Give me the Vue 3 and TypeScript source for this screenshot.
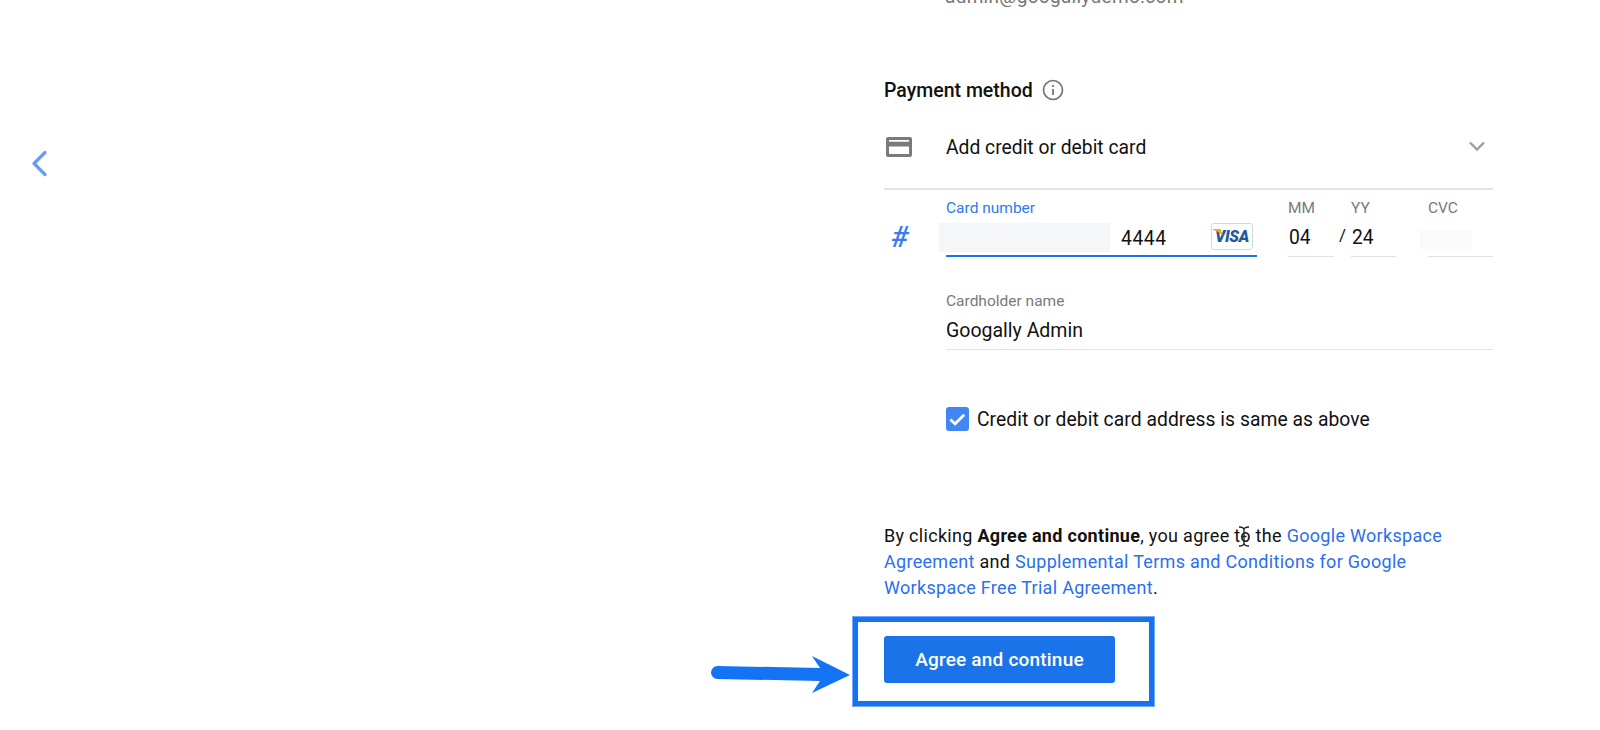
<script setup lang="ts">
const terms = [
  'Google Workspace Agreement',
  'Supplemental Terms and Conditions for Google Workspace Free Trial Agreement',
]
</script>

<template>
  <div class="page">
    <aside class="rail">
      <svg class="back" width="20" height="28" viewBox="0 0 20 28" fill="none">
        <path d="M17 2.500 6 13.500l11 11" stroke="#659df6" stroke-width="3.200" stroke-linecap="round" stroke-linejoin="round" />
      </svg>
    </aside>

    <main class="col">
      <div class="email">admin@googallydemo.com</div>

      <div class="pm-title">
        <span>Payment method</span>
        <svg width="22" height="22" viewBox="0 0 22 22" fill="none">
          <circle cx="11" cy="11" r="9.500" stroke="#757575" stroke-width="1.700" />
          <path d="M11 10v6" stroke="#757575" stroke-width="1.800" />
          <path d="M11 6v2" stroke="#757575" stroke-width="1.800" />
        </svg>
      </div>

      <div class="pm-row">
        <svg class="cardicon" width="26" height="20" viewBox="0 0 26 20">
          <path fill="#7a7a7a" fill-rule="evenodd" d="M2 0h22a2 2 0 0 1 2 2v16a2 2 0 0 1-2 2H2a2 2 0 0 1-2-2V2a2 2 0 0 1 2-2Zm1 3v1.700h20V3H3Zm0 6.500V17h20V9.500H3Z" />
        </svg>
        <span class="pm-label">Add credit or debit card</span>
        <svg class="chev" width="16" height="10" viewBox="0 0 16 10" fill="none">
          <path d="M1 1.500 8 8.500l7-7" stroke="#9e9e9e" stroke-width="2.400" />
        </svg>
      </div>

      <div class="card-row">
        <div class="hash">#</div>
        <div class="field number">
          <label class="blue">Card number</label>
          <div class="num-line">
            <span class="mask"></span>
            <span class="value digits">4444</span>
            <span class="visa">
              <svg class="flick" width="11" height="7" viewBox="0 0 11 7"><path fill="#f0a81e" d="M0 0h7.500L10 7C7 3.500 3.500 1.500 0 1Z" /></svg>
              <i>VISA</i>
            </span>
          </div>
        </div>
        <div class="field mm">
          <label>MM</label>
          <div class="value line">04</div>
        </div>
        <span class="slash">/</span>
        <div class="field yy">
          <label>YY</label>
          <div class="value line">24</div>
        </div>
        <div class="field cvc">
          <label>CVC</label>
          <div class="line cvc-line"><span class="mask small"></span></div>
        </div>
      </div>

      <div class="holder">
        <label>Cardholder name</label>
        <div class="value line">Googally Admin</div>
      </div>

      <div class="check-row">
        <span class="check">
          <svg width="24" height="24" viewBox="0 0 24 24" fill="none">
            <path d="M4.500 12.500l5 4.500L19 7.500" stroke="#fff" stroke-width="2.800" />
          </svg>
        </span>
        <span class="check-text">Credit or debit card address is same as above</span>
      </div>

      <p class="legal">
        By clicking <b>Agree and continue</b>, you agree to the
        <a>{{ terms[0] }}</a> and <a>{{ terms[1] }}</a>.
      </p>

      <div class="cta">
        <button type="button">Agree and continue</button>
        <span class="highlight"></span>
        <svg class="arrow" width="140" height="38" viewBox="0 0 140 38">
          <path fill="#1473f5" d="M6.500 10 109 12 101 0l38 19-38 18 8-12-102.500-2a6.500 6.500 0 0 1 0-13Z" />
        </svg>
      </div>

      <svg class="cursor" width="12" height="21" viewBox="0 0 12 21" fill="none">
        <path d="M1 1c3 0 5 1 5 3v13c0 2-2 3-5 3M11 1C8 1 6 2 6 4m0 13c0 2 2 3 5 3M3.500 10.500h5" stroke="#222" stroke-width="1.300" />
      </svg>
    </main>
  </div>
</template>

<style>
html, body { margin: 0; background: #fff; overflow: hidden; }
</style>

<style scoped>
.page {
  width: 1600px;
  height: 730px;
  overflow: hidden;
  display: flex;
  font-family: Roboto, "Liberation Sans", sans-serif;
  color: #111;
  background: #fff;
}
.rail { width: 884px; flex: none; padding: 150px 0 0 28px; box-sizing: border-box; }
.back { display: block; }
.col { width: 609px; flex: none; position: relative; }
.email {
  margin: -14px 0 0 61px;
  height: 22px;
  line-height: 22px;
  font-size: 19px;
  letter-spacing: 0.3px;
  color: #757575;
}
.pm-title {
  margin-top: 69px;
  height: 26px;
  display: flex;
  align-items: center;
  gap: 9px;
  font-size: 19.500px;
  font-weight: 500;
}
.pm-row {
  margin-top: 20px;
  height: 65px;
  border-bottom: 2px solid #e3e3e3;
  display: flex;
  align-items: flex-start;
  position: relative;
}
.cardicon { margin: 14px 0 0 2px; flex: none; }
.pm-label { margin: 11px 0 0 34px; font-size: 19.300px; line-height: 28px; }
.chev { position: absolute; right: 8px; top: 18px; }
.card-row { display: flex; align-items: flex-start; height: 67px; }
.hash {
  width: 62px;
  flex: none;
  padding: 31px 0 0 7px;
  box-sizing: border-box;
  font-size: 30px;
  font-weight: 500;
  line-height: 32px;
  font-style: italic;
  color: #3b7bf0;
}
label { display: block; font-size: 15.500px; line-height: 18px; color: #7a7a7a; }
label.blue { color: #2b7bf2; }
.field { padding-top: 9px; flex: none; }
.value { font-size: 19.300px; line-height: 28px; color: #111; }
.line { border-bottom: 1px solid #e2e2e2; }
.number { width: 311px; }
.num-line {
  height: 32px;
  margin-top: 6px;
  border-bottom: 2px solid #1a73e8;
  display: flex;
  align-items: center;
  position: relative;
}
.mask { display: block; width: 171px; height: 29px; margin: -3px 0 0 -7px; background: #f5f6f8; flex: none; }
.mask.small { width: 52px; height: 19px; background: #fafafa; margin: 0 0 0 -8px; }
.digits { margin-left: 11px; letter-spacing: 0.6px; }
.visa {
  position: absolute;
  right: 4px;
  top: 0;
  width: 42px;
  height: 27px;
  box-sizing: border-box;
  border: 1.500px solid #d6d6d6;
  border-radius: 3px;
  text-align: center;
  font-size: 16px;
  line-height: 26px;
  letter-spacing: -0.3px;
  font-weight: 900;
  color: #1d5a9e;
  background: #fff;
}
.visa i { font-style: italic; }
.flick { position: absolute; left: 1px; top: 5px; }
.mm { width: 46px; margin-left: 31px; }
.mm .value, .yy .value { margin-top: 6px; height: 34px; line-height: 29px; box-sizing: border-box; padding-left: 1px; }
.slash { width: 17px; flex: none; margin-top: 33px; font-size: 17px; line-height: 24px; padding-left: 5px; box-sizing: border-box; }
.yy { width: 45px; }
.cvc { width: 65px; margin-left: 32px; }
.cvc-line { margin-top: 6px; height: 34px; box-sizing: border-box; padding-top: 7px; }
.holder { margin: 35px 0 0 62px; }
.holder .value { margin-top: 7px; padding-bottom: 4px; font-size: 19.500px; }
.check-row { margin: 56px 0 0 62px; display: flex; align-items: center; gap: 8px; height: 26px; }
.check {
  width: 23px;
  height: 24px;
  border-radius: 3px;
  background: #4285f4;
  display: flex;
  align-items: center;
  justify-content: center;
}
.check-text { font-size: 19.300px; letter-spacing: 0.05px; }
.legal {
  margin: 91px 0 0;
  width: 600px;
  font-size: 18px;
  line-height: 26px;
  letter-spacing: 0.3px;
}
.legal b { font-weight: 700; }
.legal a { color: #2a6ff0; }
.cta { margin-top: 35px; position: relative; }
button {
  display: block;
  width: 231px;
  height: 47px;
  border: 0;
  border-radius: 3px;
  background: #1a73e8;
  color: #fff;
  font: 500 19px Roboto, "Liberation Sans", sans-serif;
  letter-spacing: 0.2px;
}
.highlight {
  position: absolute;
  left: -32px;
  top: -20px;
  width: 303px;
  height: 91px;
  box-sizing: border-box;
  border: 6px solid #1473f5;
  outline: 1px solid #7aa8f8;
  outline-offset: -1px;
}
.arrow { position: absolute; left: -173px; top: 20px; }
.cursor { position: absolute; left: 354px; top: 526px; }
</style>
